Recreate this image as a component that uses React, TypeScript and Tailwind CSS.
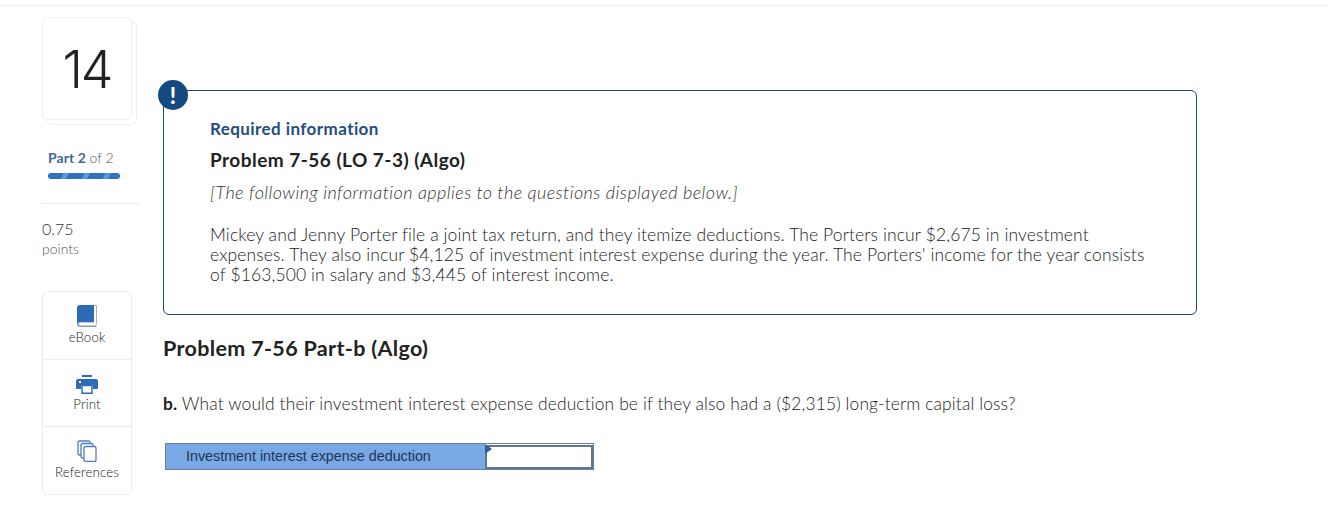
import type { ReactNode } from 'react';

const BODY_FONT = "font-['Lato','Noto_Sans',sans-serif]";

function BookIcon() {
  return (
    <svg width="20" height="22" viewBox="0 0 20 22">
      <path d="M0 3a3 3 0 0 1 3-3h14v17H3a3 3 0 0 0-3 2z" fill="#2f6bb5" />
      <path d="M17.500 0.500h2v19" fill="none" stroke="#9db4cf" strokeWidth="1" />
      <path d="M0 18.500a3 3 0 0 0 3 3.500h16.500v-1.500H3.500q-1.500 0-1.500-1.500t1.500-1.500H17v-.5H3a3 3 0 0 0-3 1.500z" fill="#7f9fc4" />
    </svg>
  );
}

function PrintIcon() {
  return (
    <svg width="22" height="19" viewBox="0 0 22 19">
      <rect x="6" y="0" width="10" height="2" fill="#2f6bb5" />
      <path d="M2 4h18a2 2 0 0 1 2 2v7a1 1 0 0 1-1 1h-4v-4H5v4H1a1 1 0 0 1-1-1V6a2 2 0 0 1 2-2z" fill="#2f6bb5" />
      <rect x="3" y="6" width="2" height="2" fill="#fff" />
      <rect x="6" y="10.500" width="10" height="7.750" fill="#fff" stroke="#2f6bb5" strokeWidth="1.500" />
    </svg>
  );
}

function PagesIcon() {
  return (
    <svg width="20" height="22" viewBox="0 0 20 22" fill="#fff" stroke="#4f7fb8" strokeWidth="1.300">
      <rect x="1" y="1" width="12" height="14" rx="1.500" />
      <rect x="4" y="3.500" width="12" height="14.500" rx="1.500" />
      <rect x="7" y="6.500" width="12" height="15" rx="1.500" />
    </svg>
  );
}

function ToolItem({ icon, label, className }: { icon: ReactNode; label: string; className: string }) {
  return (
    <div className={`flex flex-col items-center justify-end pb-[14px] ${className}`}>
      <div className="flex h-[26px] items-end">{icon}</div>
      <span className="mt-[2px] text-[13.300px] leading-[16px] font-light tracking-[0.1px] text-[#222]">{label}</span>
    </div>
  );
}

function Sidebar() {
  return (
    <aside className="w-[98px] shrink-0">
      <div className="relative h-[108px] w-[95px]">
        <div className="absolute top-[4px] left-[4px] h-[104px] w-[91px] rounded-md border border-[#efefef] bg-white" />
        <div className="absolute top-0 left-0 flex h-[103px] w-[90px] items-center justify-center rounded-md border border-[#efefef] bg-white pt-[2px] font-['Inter',sans-serif] text-[52px] font-light tracking-[-2px] text-[#222]">
          14
        </div>
      </div>
      <div className="mt-[24px] pl-[6px] text-[14px] leading-[18px] tracking-[0.05px] text-[#555]">
        <span className="font-bold text-[#42689b]">Part 2</span> <span className="font-light">of 2</span>
      </div>
      <div className="mt-[6px] ml-[6px] h-[6px] w-[72px] rounded-full bg-[repeating-linear-gradient(115deg,#2f72bd_0px,#2f72bd_14px,#5b97d8_14px,#5b97d8_19px)]" />
      <div className="mt-[24px] w-[98px] border-t border-[#eee]" />
      <div className="mt-[15px] text-[16px] leading-[20px] font-light text-[#333]">0.75</div>
      <div className="text-[14px] leading-[20px] font-light text-[#555]">points</div>
      <div className="mt-[32px] w-[90px] rounded-md border border-[#ececec]">
        <ToolItem icon={<BookIcon />} label="eBook" className="h-[68px] border-b border-[#ececec]" />
        <ToolItem icon={<PrintIcon />} label="Print" className="h-[67px] border-b border-[#ececec]" />
        <ToolItem icon={<PagesIcon />} label="References" className="h-[67px]" />
      </div>
    </aside>
  );
}

export default function App() {
  return (
    <div className={`h-[526px] w-[1328px] overflow-hidden bg-white ${BODY_FONT}`}>
      <div className="h-[6px] border-b border-[#eeeeee]" />
      <div className="flex gap-[23px] pt-[11px] pl-[42px]">
        <Sidebar />
        <main className="w-[1034px] pt-[73px]">
          <section className="relative h-[225px] rounded-md border border-[#1b4a73] pt-[28px] pl-[46px]">
            <div className="absolute -top-[11px] -left-[6px] flex h-[30px] w-[30px] items-center justify-center rounded-full bg-[#134a82] text-[22px] font-black text-white">
              !
            </div>
            <div className="text-[17px] leading-[20px] font-bold tracking-[0.42px] text-[#1f4e7e]">Required information</div>
            <h2 className="mt-[10px] text-[19px] leading-[22px] font-bold tracking-[0.47px] text-[#222]">Problem 7-56 (LO 7-3) (Algo)</h2>
            <p className="mt-[11px] text-[18px] leading-[20px] font-light tracking-[0.45px] text-[#333] italic">
              [The following information applies to the questions displayed below.]
            </p>
            <p className="mt-[22px] w-[940px] pt-[1px] text-[17.500px] leading-[20px] font-light tracking-[0.12px] text-[#222]">
              Mickey and Jenny Porter file a joint tax return, and they itemize deductions. The Porters incur $2,675 in
              investment expenses. They also incur $4,125 of investment interest expense during the year. The Porters'
              income for the year consists of $163,500 in salary and $3,445 of interest income.
            </p>
          </section>
          <h1 className="mt-[20px] text-[21.500px] leading-[26px] font-bold tracking-[0.34px] text-[#222]">Problem 7-56 Part-b (Algo)</h1>
          <p className="mt-[32px] text-[17.400px] leading-[22px] font-light tracking-[0.13px] text-[#222]">
            <strong className="font-bold">b.</strong> What would their investment interest expense deduction be if they
            also had a ($2,315) long-term capital loss?
          </p>
          <div className="mt-[28px] ml-[2px] flex h-[27px] w-[429px] border border-[#6b7f95] font-['Liberation_Sans',sans-serif]">
            <div className="relative flex w-[319px] items-center bg-[#78a9e6] pl-[20px] text-[14.300px] text-[#22344f]">
              Investment interest expense deduction
              <span className="absolute top-0 -right-[7px] h-0 w-0 border-y-[5px] border-l-[7px] border-y-transparent border-l-[#2f5f96]" />
            </div>
            <div className="mt-[1px] flex-1 border-2 border-[#5f7690] bg-white" />
          </div>
        </main>
      </div>
    </div>
  );
}
